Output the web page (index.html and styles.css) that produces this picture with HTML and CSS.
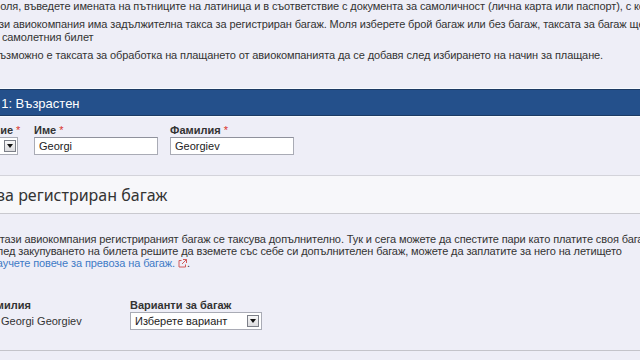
FILE: index.html
```html
<!DOCTYPE html>
<html lang="bg">

<head>
    <meta charset="UTF-8">
    <meta name="viewport" content="width=device-width, initial-scale=1.0">
    <title>Пътници и багаж</title>
    <link rel="stylesheet" href="styles.css">
</head>

<body>
    <div class="page">
        <div class="notes">
            <p class="note note-names">Моля, въведете имената на пътниците на латиница и в съответствие с документа за самоличност (лична карта или паспорт), с който ще пътувате.</p>
            <p class="note note-fee">Тази авиокомпания има задължителна такса за регистриран багаж. Моля изберете брой багаж или без багаж, таксата за багаж ще бъде добавена към цената<br>на самолетния билет</p>
            <p class="note note-pay">Възможно е таксата за обработка на плащането от авиокомпанията да се добавя след избирането на начин за плащане.</p>
        </div>

        <div class="passenger">
            <div class="passenger-head">Пътник 1: Възрастен</div>
            <div class="passenger-fields">
                <div class="field field-title">
                    <label>Обръщение <span class="req">*</span></label>
                    <div class="select select-title">
                        <span class="select-text">Г-н</span>
                        <span class="select-btn"></span>
                    </div>
                </div>
                <div class="field field-name">
                    <label for="first-name">Име <span class="req">*</span></label>
                    <input type="text" id="first-name" value="Georgi">
                </div>
                <div class="field field-name">
                    <label for="last-name">Фамилия <span class="req">*</span></label>
                    <input type="text" id="last-name" value="Georgiev">
                </div>
            </div>
        </div>

        <div class="bags">
            <h2 class="bags-title">Такса за регистриран багаж</h2>
            <p class="bags-info">С тази авиокомпания регистрираният багаж се таксува допълнително. Тук и сега можете да спестите пари като платите своя багаж предварително.<br>След закупуването на билета решите да вземете със себе си допълнителен багаж, можете да заплатите за него на летището<br><a href="#">Научете повече за превоза на багаж.</a> <svg class="ext" width="9" height="9" viewBox="0 0 9 9"><path d="M3.5 1.5H1v6.5h6.5V5.5" fill="none" stroke="#d05a5a" stroke-width="1"/><path d="M5 0.5h3.5V4M8.5 0.5L4 5" fill="none" stroke="#d05a5a" stroke-width="1"/></svg>.</p>
            <div class="bag-row">
                <div class="bag-col bag-name">
                    <div class="bag-label">Име и фамилия</div>
                    <div class="bag-value">Georgi Georgiev</div>
                </div>
                <div class="bag-col bag-choice">
                    <div class="bag-label">Варианти за багаж</div>
                    <div class="select select-bag">
                        <span class="select-text">Изберете вариант</span>
                        <span class="select-btn"></span>
                    </div>
                </div>
            </div>
        </div>
    </div>
</body>

</html>
```

FILE: styles.css
```css
body {
    margin: 0;
    background-color: #eeeef7;
    font-family: "Liberation Sans", Arial, sans-serif;
    font-size: 11px;
    color: #333;
    overflow: hidden;
    height: 360px;
}

.page {
    width: 640px;
}

/* notices on top */

.note {
    margin: 0;
    line-height: 13px;
    letter-spacing: -0.1px;
    white-space: nowrap;
}

.note-names {
    margin-left: -9px;
}

.note-fee {
    margin-top: 5px;
    margin-left: -13px;
}

.note-pay {
    margin-top: 5px;
    margin-left: -8px;
}

/* passenger block */

.passenger {
    margin-top: 27px;
}

.passenger-head {
    margin-left: -60px;
    padding-left: 14px;
    height: 25px;
    line-height: 27px;
    background-color: #24508b;
    border-top: 1px solid #1c3a63;
    border-bottom: 1px solid #1c3a63;
    box-shadow: 0 -1px 0 #f7faff, 0 1px 0 #f7faff;
    color: #fff;
    font-size: 13px;
}

.passenger-fields {
    display: flex;
    margin-top: 8px;
    margin-left: -52px;
    gap: 12px;
}

.field-title {
    width: 70px;
    margin-right: 4px;
}

.field label {
    display: block;
    font-weight: bold;
    line-height: 13px;
    white-space: nowrap;
}

.req {
    color: #d9342b;
    font-weight: normal;
}

.field-name {
    width: 124px;
}

.field input {
    box-sizing: border-box;
    width: 124px;
    height: 18px;
    margin: 0;
    padding: 0 4px;
    border: 1px solid #a9abb5;
    border-top-color: #8f919c;
    background-color: #fff;
    font-family: "Liberation Sans", Arial, sans-serif;
    font-size: 11px;
    color: #222;
}

.select {
    box-sizing: border-box;
    display: flex;
    align-items: center;
    height: 18px;
    border: 1px solid #a9abb5;
    background-color: #fff;
    padding: 0 1px 0 4px;
}

.select-title {
    width: 70px;
}

.select-text {
    flex: 1;
    white-space: nowrap;
    color: #222;
}

.select-btn {
    position: relative;
    box-sizing: border-box;
    width: 12px;
    height: 12px;
    border: 1px solid #7c7f88;
    background: linear-gradient(#f8f8f8, #dcdcdf);
}

.select-btn::after {
    content: "";
    position: absolute;
    left: 2px;
    top: 3px;
    border-left: 3px solid transparent;
    border-right: 3px solid transparent;
    border-top: 4px solid #111;
}

/* baggage block */

.bags {
    margin-top: 20px;
    border-top: 1px solid #d3d3da;
    border-bottom: 1px solid #c4c4ca;
    padding-bottom: 20px;
}

.bags-title {
    margin: 0 0 0 -49px;
    height: 37px;
    line-height: 39px;
    background-color: #f7f7fa;
    border-bottom: 1px solid #c9c9cf;
    font-family: "Noto Sans", "Liberation Sans", sans-serif;
    font-size: 16px;
    font-weight: normal;
    color: #333;
    white-space: nowrap;
}

.bags-info {
    margin: 19px 0 0 -11px;
    line-height: 12px;
    letter-spacing: -0.1px;
    white-space: nowrap;
}

.bags-info a {
    color: #3f7bc6;
    text-decoration: none;
}

.ext {
    vertical-align: -1px;
}

.bag-row {
    display: flex;
    margin-top: 30px;
}

.bag-name {
    width: 130px;
}

.bag-label {
    font-weight: bold;
    line-height: 13px;
    white-space: nowrap;
}

.bag-name .bag-label {
    margin-left: -55px;
}

.bag-value {
    line-height: 18px;
    padding-left: 1px;
}

.select-bag {
    width: 132px;
    padding-left: 4px;
    padding-right: 2px;
}
```
